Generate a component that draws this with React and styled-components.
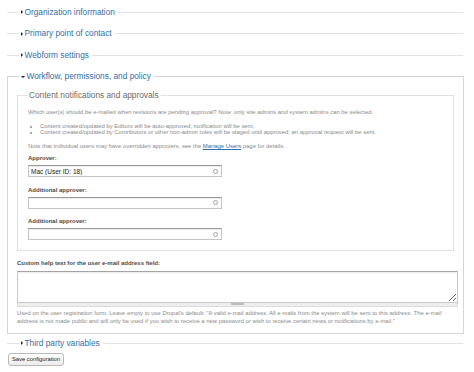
import React from 'react'
import styled, { createGlobalStyle } from 'styled-components'

const GlobalStyle = createGlobalStyle`
  html, body { margin: 0; padding: 0; background: #fff; }
  body { font-family: "Liberation Sans", Arial, sans-serif; color: #333; }
  * { box-sizing: border-box; }
`

const approvers = [
  { label: 'Approver:', value: 'Mac (User ID: 18)' },
  { label: 'Additional approver:', value: '' },
  { label: 'Additional approver:', value: '' },
]

const collapsedTop = ['Organization information', 'Primary point of contact', 'Webform settings']

function Arrow({ open }) {
  return <Tri $open={open} />
}

function App() {
  return (
    <Page>
      <GlobalStyle />
      {collapsedTop.map((t) => (
        <CollapsedSet key={t}>
          <SetLegend>
            <Arrow />
            <LegendLink href="#">{t}</LegendLink>
          </SetLegend>
        </CollapsedSet>
      ))}

      <OpenSet>
        <SetLegend $open>
          <Arrow open />
          <LegendLink href="#">Workflow, permissions, and policy</LegendLink>
        </SetLegend>

        <InnerSet>
          <InnerLegend>Content notifications and approvals</InnerLegend>
          <Desc $top={7.5}>
            Which user(s) should be e-mailed when revisions are pending approval? Note: only site admins and system admins can be selected.
          </Desc>
          <Bullets>
            <li>Content created/updated by Editors will be auto-approved; notification will be sent.</li>
            <li>Content created/updated by Contributors or other non-admin roles will be staged until approved; an approval request will be sent.</li>
          </Bullets>
          <Desc $top={6.5}>
            Note that individual users may have overridden approvers, see the <InlineLink href="#">Manage Users</InlineLink> page for details.
          </Desc>

          {approvers.map((a, i) => (
            <FormItem key={i} $top={i === 0 ? 4 : 8.5}>
              <Label>{a.label}</Label>
              <AutoWrap>
                <TextInput defaultValue={a.value} />
                <Throbber />
              </AutoWrap>
            </FormItem>
          ))}
        </InnerSet>

        <FormItem $top={8}>
          <Label $gap={4}>Custom help text for the user e-mail address field:</Label>
          <TextArea />
          <Grippie>
            <GripHandle />
          </Grippie>
          <Desc $top={2}>
            Used on the user registration form. Leave empty to use Drupal's default: "A valid e-mail address. All e-mails from the system will be sent to this address. The e-mail address is not made public and will only be used if you wish to receive a new password or wish to receive certain news or notifications by e-mail."
          </Desc>
        </FormItem>
      </OpenSet>

      <CollapsedSet $top={3.5}>
        <SetLegend>
          <Arrow />
          <LegendLink href="#">Third party variables</LegendLink>
        </SetLegend>
      </CollapsedSet>

      <Actions>
        <SaveButton type="button">Save configuration</SaveButton>
      </Actions>
    </Page>
  )
}

export default App

const Page = styled.div`
  width: 474px;
  height: 372px;
  padding: 6.5px 10px 0 7px;
  display: flex;
  flex-direction: column;
  overflow: hidden;
`

const CollapsedSet = styled.fieldset`
  margin: ${(p) => p.$top || 0}px 1px 10.5px 0;
  padding: 0;
  min-width: 0;
  border: 0;
  border-top: 1px solid #e2e2e2;
`

const SetLegend = styled.legend`
  margin-left: ${(p) => (p.$open ? 2 : 12)}px;
  padding: 0 3px 0 2px;
  height: 11px;
  line-height: 11px;
  display: flex;
  align-items: center;
  font-size: 8.3px;
`

const Tri = styled.span`
  width: 0;
  height: 0;
  margin-right: 1.5px;
  border-style: solid;
  border-color: transparent;
  ${(p) =>
    p.$open
      ? `border-width: 2.5px 2px 0 2px; border-top-color: #222;`
      : `border-width: 2px 0 2px 2.5px; border-left-color: #222;`}
`

const LegendLink = styled.a`
  color: #2f6fae;
  text-decoration: none;
`

const OpenSet = styled.fieldset`
  margin: 0;
  padding: 0 5px 8.5px 9px;
  min-width: 0;
  border: 1px solid #d6d6d6;
`

const InnerSet = styled.fieldset`
  margin: 7.5px 4px 0 0;
  padding: 0 10px 9.5px 10px;
  min-width: 0;
  border: 1px solid #e0e0e0;
`

const InnerLegend = styled.legend`
  padding: 0 2px 0 1px;
  height: 11px;
  line-height: 11px;
  font-size: 8.3px;
  color: #6a6a6a;
`

const Desc = styled.p`
  margin: ${(p) => p.$top}px 0 0;
  font-size: 5.9px;
  line-height: 8px;
  color: #8a8a8a;
`

const Bullets = styled.ul`
  margin: 6.5px 0 0;
  padding: 0 0 0 12px;
  font-size: 5.9px;
  line-height: 6.5px;
  color: #8a8a8a;
  list-style: disc;
`

const InlineLink = styled.a`
  color: #2f6fae;
  text-decoration: underline;
`

const FormItem = styled.div`
  margin-top: ${(p) => p.$top}px;
  display: flex;
  flex-direction: column;
`

const Label = styled.label`
  font-size: 6px;
  line-height: 8px;
  font-weight: bold;
  color: #4a4a4a;
  margin-bottom: ${(p) => p.$gap || 3}px;
`

const AutoWrap = styled.div`
  position: relative;
  width: 194px;
  height: 12px;
`

const TextInput = styled.input`
  display: block;
  width: 100%;
  height: 100%;
  margin: 0;
  padding: 0 2px;
  border: 1px solid #c4c4c4;
  border-top-color: #9a9a9a;
  box-shadow: inset 0 1px 1px rgba(0, 0, 0, 0.08);
  font-family: "Liberation Sans", Arial, sans-serif;
  font-size: 6.5px;
  color: #222;
  outline: none;
`

const Throbber = styled.span`
  position: absolute;
  right: 4px;
  top: 3.5px;
  width: 5px;
  height: 5px;
  border: 1px solid #a0a0a0;
  border-radius: 50%;
`

const TextArea = styled.textarea`
  display: block;
  width: 100%;
  height: 32px;
  margin: 0;
  padding: 2px;
  border: 1px solid #c8c8c8;
  border-top-color: #a4a4a4;
  box-shadow: inset 0 1px 1px rgba(0, 0, 0, 0.08);
  resize: vertical;
  font-family: "Liberation Sans", Arial, sans-serif;
  font-size: 6.5px;
  outline: none;
`

const Grippie = styled.div`
  height: 4px;
  background: #eeeeee;
  border: 1px solid #dddddd;
  border-top: 0;
  display: flex;
  justify-content: center;
  align-items: center;
`

const GripHandle = styled.span`
  width: 13px;
  height: 2px;
  background: #bdbdbd;
`

const Actions = styled.div`
  margin-top: -6px;
  padding-left: 1px;
  display: flex;
`

const SaveButton = styled.button`
  height: 13px;
  padding: 0 3px;
  border: 1px solid #b9b9b9;
  border-radius: 3px;
  background: linear-gradient(#ffffff, #ececec);
  font-family: "Liberation Sans", Arial, sans-serif;
  font-size: 5.8px;
  line-height: 11px;
  color: #222;
`
